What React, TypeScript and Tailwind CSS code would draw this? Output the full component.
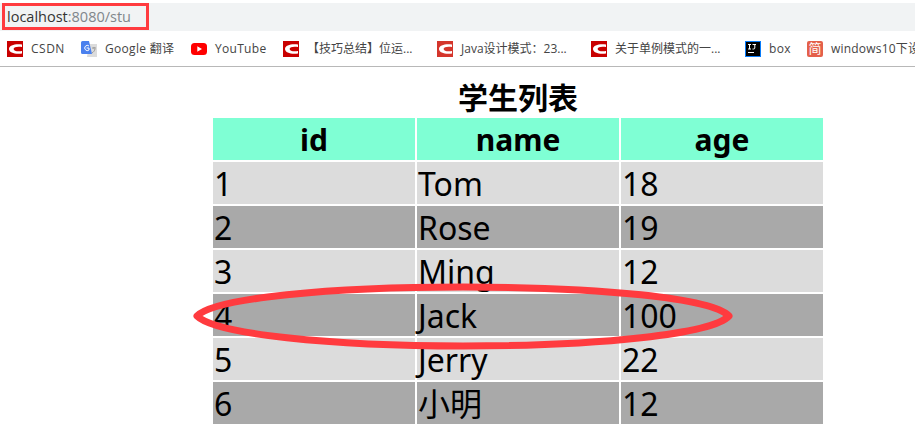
const C = ({ red = "#c90000" }: { red?: string }) => (
  <svg width="16" height="16" viewBox="0 0 16 16" className="shrink-0">
    <rect width="16" height="16" fill={red} />
    <path d="M15 3.6 C9 2.6 2 4 2 8 C2 12 9 13.4 15 12.4 L15 10 C11.5 10.8 6.6 10.4 6.6 8 C6.6 5.6 11.5 5.2 15 6 Z" fill="#fff" />
  </svg>
);
const Translate = () => (
  <svg width="16" height="16" viewBox="0 0 16 16" className="shrink-0">
    <path d="M8 3 H16 V16 H6 Z" fill="#dcdcdc" />
    <path d="M0 1.5 A1.5 1.5 0 0 1 1.5 0 H8 L11 13 H1.5 A1.5 1.5 0 0 1 0 11.5 Z" fill="#4a80ee" />
    <path d="M8 5 A2.6 2.6 0 1 0 8 9 V7 H5.6" fill="none" stroke="#fff" strokeWidth="1" />
    <path d="M11 7 H15 M13 6 V7.5 M14 8 C13.5 10 12.5 11 11 12" stroke="#888" strokeWidth="0.8" fill="none" />
  </svg>
);
const Yt = () => (
  <svg width="16" height="16" viewBox="0 0 16 16" className="shrink-0">
    <rect x="0" y="2" width="16" height="12" rx="3.5" fill="#f00" />
    <path d="M6.3 5.2 L11 8 L6.3 10.8 Z" fill="#fff" />
  </svg>
);
const Ij = () => (
  <svg width="16" height="16" viewBox="0 0 16 16" className="shrink-0">
    <rect width="16" height="16" fill="#087cfa" />
    <rect x="1" y="1" width="14" height="14" fill="#000" />
    <rect x="3" y="11" width="6" height="1" fill="#fff" />
    <path d="M3 3.5 H6 M4.5 3.5 V8 M3 8 H6 M7.5 3.5 H11 M9.8 3.5 V7 Q9.8 8 8.6 8 H7.5" stroke="#fff" strokeWidth="1" fill="none" />
  </svg>
);
const Jian = () => (
  <span className="flex h-4 w-4 shrink-0 items-center justify-center rounded-[2px] bg-[#e4604a] text-[13px] leading-none text-white">简</span>
);

const marks: [React.ReactNode, string, string][] = [
  [<C />, "CSDN", "w-[74px] tracking-[0.5px]"],
  [<Translate />, "Google 翻译", "w-[110px] tracking-[0.3px]"],
  [<Yt />, "YouTube", "w-[92px] tracking-[0.3px]"],
  [<C />, "【技巧总结】位运...", "w-[154px]"],
  [<C red="#d4352b" />, "Java设计模式：23...", "w-[154px]"],
  [<C />, "关于单例模式的一...", "w-[154px]"],
  [<Ij />, "box", "w-[62px] tracking-[0.3px]"],
  [<Jian />, "windows10下设置", "w-[120px] tracking-[0.2px]"],
];

const rows: [string, string, string][] = [
  ["1", "Tom", "18"],
  ["2", "Rose", "19"],
  ["3", "Ming", "12"],
  ["4", "Jack", "100"],
  ["5", "Jerry", "22"],
  ["6", "小明", "12"],
];

export default function App() {
  return (
    <div className="relative h-[446px] w-[915px] overflow-hidden bg-white font-['Noto_Sans','Noto_Sans_CJK_SC',sans-serif] text-black">
      <div className="mt-[3px] flex h-[28px] items-center bg-[#f1f3f4] pl-[7px] font-['Open_Sans','Noto_Sans_CJK_SC',sans-serif] text-[14.5px]">
        <span className="text-[#333]">localhost</span>
        <span className="text-[#80868b]">:8080/stu</span>
      </div>
      <div className="flex h-[36px] items-center overflow-hidden border-b border-[#b8b8b8] pl-[7px] font-['Open_Sans','Noto_Sans_CJK_SC',sans-serif] text-[12px] text-[#444]">
        {marks.map(([icon, label, cls], i) => (
          <div key={i} className={`flex shrink-0 items-center gap-2 ${cls}`}>
            {icon}
            <span className="whitespace-nowrap">{label}</span>
          </div>
        ))}
      </div>
      <h1 className="ml-[213px] h-[49px] w-[610px] pt-[12px] text-center text-[30px] font-bold leading-[37px]">学生列表</h1>
      <table className="ml-[211px] w-[614px] table-fixed border-separate border-spacing-[2px] text-[32px]">
        <thead>
          <tr className="bg-[#7fffd4] text-[30px]">
            <th className="h-[42px] p-0 pt-px font-bold leading-[41px]">id</th>
            <th className="h-[42px] p-0 pt-px font-bold leading-[41px]">name</th>
            <th className="h-[42px] p-0 pt-px font-bold leading-[41px]">age</th>
          </tr>
        </thead>
        <tbody>
          {rows.map((r, i) => (
            <tr key={r[0]} className={i % 2 === 0 ? "bg-[#dcdcdc]" : "bg-[#a9a9a9]"}>
              {r.map((c, j) => (
                <td key={j} className="h-[42px] p-0 pl-px pt-px leading-[41px]">{c}</td>
              ))}
            </tr>
          ))}
        </tbody>
      </table>
      <div className="absolute left-[2px] top-[3px] h-[27px] w-[147px] border-[3px] border-[#ff3b3f]" />
      <svg className="absolute left-0 top-0" width="915" height="446" viewBox="0 0 915 446">
        <path d="M197 316 C215 298 330 287 463 287 C600 287 712 298 729 316 C712 334 600 346 463 346 C330 346 215 334 197 316 Z" fill="none" stroke="#ff3b3f" strokeWidth="7" strokeLinejoin="round" />
      </svg>
    </div>
  );
}
